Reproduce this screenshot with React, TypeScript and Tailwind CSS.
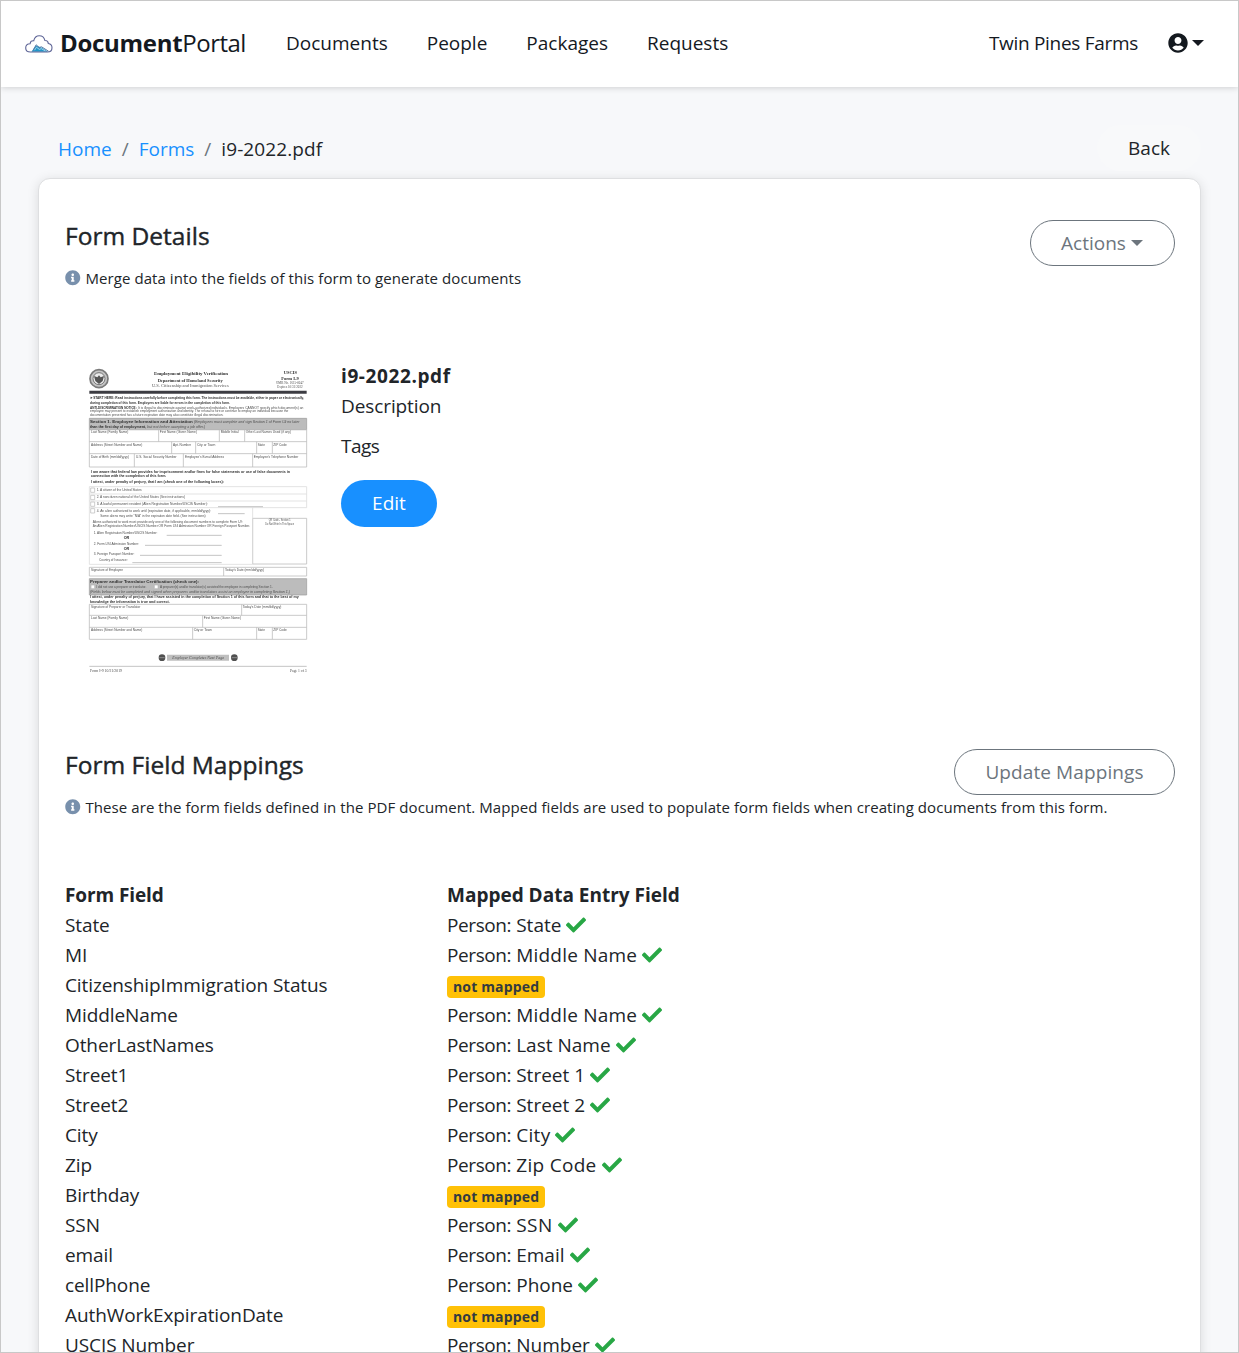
import type { ReactNode } from "react";
import { FaCheck, FaInfoCircle, FaUserCircle } from "react-icons/fa";

const navItems = ["Documents", "People", "Packages", "Requests"];

type Mapping = { field: string; mapped?: string; tracking?: string };

const mappings: Mapping[] = [
  { field: "State", mapped: "State" },
  { field: "MI", mapped: "Middle Name", tracking: "tracking-[0.2px]" },
  { field: "CitizenshipImmigration Status" },
  { field: "MiddleName", mapped: "Middle Name", tracking: "tracking-[0.2px]" },
  { field: "OtherLastNames", mapped: "Last Name" },
  { field: "Street1", mapped: "Street 1" },
  { field: "Street2", mapped: "Street 2" },
  { field: "City", mapped: "City", tracking: "tracking-[0.3px]" },
  { field: "Zip", mapped: "Zip Code", tracking: "tracking-[0.3px]" },
  { field: "Birthday" },
  { field: "SSN", mapped: "SSN", tracking: "tracking-[0.5px]" },
  { field: "email", mapped: "Email" },
  { field: "cellPhone", mapped: "Phone" },
  { field: "AuthWorkExpirationDate" },
  { field: "USCIS Number", mapped: "Number" },
];

// x, baseline, width, text, style: b = bold, i = italic, s = serif
type Line = [number, number, number, string, string?];

const formLines: Line[] = [
  [222, 46, 222, "Employment Eligibility Verification", "bs"],
  [233, 66, 195, "Department of Homeland Security", "bs"],
  [216, 82, 230, "U.S. Citizenship and Immigration Services", "s"],
  [611, 43, 40, "USCIS", "bs"],
  [604, 60, 52, "Form I-9", "bs"],
  [588, 73, 83, "OMB No. 1615-0047", "s"],
  [592, 85, 76, "Expires 10/31/2022", "s"],
  [30, 118, 642, "►START HERE: Read instructions carefully before completing this form. The instructions must be available, either in paper or electronically,", "b"],
  [30, 131, 420, "during completion of this form. Employers are liable for errors in the completion of this form.", "b"],
  [30, 146, 140, "ANTI-DISCRIMINATION NOTICE:", "b"],
  [174, 146, 496, "It is illegal to discriminate against work-authorized individuals. Employers CANNOT specify which document(s) an"],
  [30, 157, 595, "employee may present to establish employment authorization and identity. The refusal to hire or continue to employ an individual because the"],
  [30, 168, 400, "documentation presented has a future expiration date may also constitute illegal discrimination."],
  [30, 188, 308, "Section 1. Employee Information and Attestation", "b"],
  [342, 188, 316, "(Employees must complete and sign Section 1 of Form I-9 no later", "i"],
  [30, 203, 168, "than the first day of employment,", "b"],
  [202, 203, 174, "but not before accepting a job offer.)", "i"],
  [33, 220, 112, "Last Name (Family Name)"],
  [239, 220, 112, "First Name (Given Name)"],
  [422, 220, 54, "Middle Initial"],
  [497, 220, 136, "Other Last Names Used (if any)"],
  [33, 257, 154, "Address (Street Number and Name)"],
  [279, 257, 54, "Apt. Number"],
  [351, 257, 55, "City or Town"],
  [533, 257, 22, "State"],
  [580, 257, 40, "ZIP Code"],
  [33, 293, 114, "Date of Birth (mm/dd/yyyy)"],
  [168, 293, 122, "U.S. Social Security Number"],
  [315, 293, 117, "Employee's E-mail Address"],
  [521, 293, 134, "Employee's Telephone Number"],
  [33, 338, 597, "I am aware that federal law provides for imprisonment and/or fines for false statements or use of false documents in", "b"],
  [33, 351, 226, "connection with the completion of this form.", "b"],
  [33, 370, 399, "I attest, under penalty of perjury, that I am (check one of the following boxes):", "b"],
  [50, 394, 135, "1. A citizen of the United States"],
  [50, 415, 265, "2. A noncitizen national of the United States (See instructions)"],
  [50, 435, 333, "3. A lawful permanent resident (Alien Registration Number/USCIS Number):"],
  [50, 455, 343, "4. An alien authorized to work until (expiration date, if applicable, mm/dd/yyyy):"],
  [61, 471, 316, 'Some aliens may write "N/A" in the expiration date field. (See instructions)'],
  [38, 488, 450, "Aliens authorized to work must provide only one of the following document numbers to complete Form I-9:"],
  [38, 500, 472, "An Alien Registration Number/USCIS Number OR Form I-94 Admission Number OR Foreign Passport Number."],
  [41, 523, 191, "1. Alien Registration Number/USCIS Number:"],
  [131, 536, 17, "OR", "b"],
  [41, 555, 136, "2. Form I-94 Admission Number:"],
  [131, 569, 17, "OR", "b"],
  [41, 585, 122, "3. Foreign Passport Number:"],
  [57, 604, 86, "Country of Issuance:"],
  [566, 484, 66, "QR Code - Section 1"],
  [556, 494, 86, "Do Not Write In This Space"],
  [33, 634, 96, "Signature of Employee"],
  [435, 634, 117, "Today's Date (mm/dd/yyyy)"],
  [30, 668, 327, "Preparer and/or Translator Certification (check one):", "b"],
  [49, 683, 150, "I did not use a preparer or translator."],
  [240, 683, 338, "A preparer(s) and/or translator(s) assisted the employee in completing Section 1."],
  [30, 698, 600, "(Fields below must be completed and signed when preparers and/or translators assist an employee in completing Section 1.)", "i"],
  [30, 715, 626, "I attest, under penalty of perjury, that I have assisted in the completion of Section 1 of this form and that to the best of my", "b"],
  [30, 729, 239, "knowledge the information is true and correct.", "b"],
  [33, 744, 148, "Signature of Preparer or Translator"],
  [488, 744, 116, "Today's Date (mm/dd/yyyy)"],
  [33, 778, 112, "Last Name (Family Name)"],
  [371, 778, 112, "First Name (Given Name)"],
  [33, 814, 154, "Address (Street Number and Name)"],
  [341, 814, 55, "City or Town"],
  [533, 814, 22, "State"],
  [580, 814, 40, "ZIP Code"],
  [277, 897, 155, "Employer Completes Next Page", "is"],
  [30, 936, 96, "Form I-9 10/21/2019", "s"],
  [630, 936, 50, "Page 1 of 3", "s"],
];

const formRules = [
  "M28 209H680V321H28ZM28 245H680M28 281H680",
  "M236 209V245M418 209V245M494 209V245M275 245V281M347 245V281M530 245V281M577 245V281M163 281V321M310 281V321M518 281V321",
  "M28 622H680V648H28ZM431 622V648",
  "M28 733H680V838H28ZM28 766H680M28 802H680M485 733V766M368 766V802M338 802V838M530 802V838M577 802V838",
  "M518 475H680V612H518Z",
].join("");

function FormThumbnail() {
  return (
    <svg viewBox="-45 -60 798 1080" className="h-[360px] w-[266px] shrink-0 blur-[0.3px]" role="img" aria-label="i9-2022.pdf preview">
      <circle cx="57" cy="56" r="27" fill="#c4c4c4" stroke="#7a7a7a" strokeWidth="5" />
      <circle cx="57" cy="56" r="18" fill="#ececec" stroke="#777" strokeWidth="3" />
      <path d="M42 48l10 4 5-6 5 6 10-4-4 15-11 9-11-9z" fill="#555" />
      <path d="M28 92H680V101H28Z" fill="#3c3c42" />
      <path d="M28 175H680V209H28ZM28 656H680V705H28Z" fill="#bcbcbc" stroke="#999" strokeWidth="2" />
      <path d={formRules} fill="none" stroke="#bdbdbd" strokeWidth="2.4" />
      <path d="M28 380H680V443M28 380V613H518V443M28 402H680M28 423H680M28 443H680" fill="none" stroke="#dcdcdc" strokeWidth="2.4" />
      <path
        d="M414 440H549M414 461H494M260 526H425M195 556H425M180 586H425M157 608H425M28 919H680"
        stroke="#b5b5b5"
        strokeWidth="2.4"
      />
      <path
        d="M32 384h12v13h-12zM32 406h12v13h-12zM32 426h12v13h-12zM32 446h12v13h-12zM33 675h11v11h-11zM223 675h11v11h-11z"
        fill="#fff"
        stroke="#b5b5b5"
        strokeWidth="2"
      />
      <path d="M261 884H447V902H261Z" fill="#bfbfbf" />
      <circle cx="246" cy="893" r="10" fill="#505050" />
      <circle cx="463" cy="893" r="10" fill="#505050" />
      <path d="M238 893h16M455 893h16" stroke="#aaa" strokeWidth="2" />
      {formLines.map(([x, y, width, text, style = ""], i) => (
        <text
          key={i}
          x={x}
          y={y}
          textLength={width}
          lengthAdjust="spacingAndGlyphs"
          fontSize={y < 70 ? 15 : style ? 12 : 10.5}
          fontFamily={style.includes("s") ? "Liberation Serif, serif" : "Liberation Sans, sans-serif"}
          fontWeight={style.includes("b") ? 700 : 400}
          fontStyle={style.includes("i") ? "italic" : "normal"}
          fill={style.includes("b") ? "#2f2f2f" : "#4f4f4f"}
        >
          {text}
        </text>
      ))}
    </svg>
  );
}

function Logo() {
  return (
    <svg viewBox="0 0 28 20" className="mt-px ml-px h-5 w-7" fill="none">
      <path d="M6.500 17.800 10.800 11.500 17 13.800 23 17.800z" fill="#2196c9" />
      <path d="M8 16.500 11.200 10.800 14.200 13.500 16.500 12.800 23.500 17.200" stroke="#5b7ba5" strokeWidth="1" />
      <path d="m9.500 16.200 2-3 2.800 2.200 2-.7 4.200 2.300" stroke="#d9edf7" strokeWidth=".7" />
      <path
        d="M5.500 18C2.700 18 .7 16.300.7 13.900c0-2.400 1.800-4.100 4.400-4.200.2-1.900 1.600-3.100 3.600-2.900C9.500 3.700 11.500 1.800 14.200 1.800c2.900 0 5.100 1.900 5.700 4.700 2-.1 3.300 1.100 3.400 3 2.200.4 3.700 2 3.700 4.200 0 2.600-1.900 4.300-4.600 4.300z"
        stroke="#5d6496"
        strokeWidth="1.100"
      />
    </svg>
  );
}

function Caret() {
  return <span className="mb-px inline-block h-0 w-0 border-x-6 border-t-6 border-x-transparent border-t-current" />;
}

function SectionHeading({ title, hint, children }: { title: string; hint: string; children: ReactNode }) {
  return (
    <div>
      <div className="flex h-[46px] items-start justify-between">
        <h2 className="mt-px text-[24.500px] leading-[30px] font-normal tracking-[0.020px] [-webkit-text-stroke:0.4px_#212529]">{title}</h2>
        {children}
      </div>
      <p className="flex items-center gap-[5px] text-[15px] leading-6 tracking-[0.070px]">
        <FaInfoCircle className="size-[15.500px] shrink-0 text-[#7890ac]" />
        {hint}
      </p>
    </div>
  );
}

export default function App() {
  return (
    <div className="h-[1353px] overflow-hidden border border-[#c8c8c8] bg-[#f7f8fa] font-['Open_Sans',sans-serif] text-[19px] leading-[30px] text-[#212529]">
      <header className="relative flex h-[86px] items-center bg-white pr-[34px] pb-0.5 pl-[23px] text-[#14191f] shadow-[0_1px_6px_rgba(0,0,0,0.16)]">
        <Logo />
        <div className="ml-[7px] w-[186px] text-2xl leading-[30px] whitespace-nowrap">
          <span className="font-bold tracking-[-0.300px]">Document</span>
          <span className="tracking-[-0.500px]">Portal</span>
        </div>
        <nav className="ml-10 flex gap-[39px]">
          {navItems.map((item) => (
            <a key={item} href="#">{item}</a>
          ))}
        </nav>
        <span className="mr-px ml-auto tracking-[-0.3px]">Twin Pines Farms</span>
        <button className="ml-[29px] flex items-center gap-1">
          <FaUserCircle className="size-5" />
          <Caret />
        </button>
      </header>

      <main className="px-[37px] pt-[38px]">
        <div className="flex h-[46px] items-center justify-between">
          <nav className="mt-0.5 flex gap-2.5 pl-5">
            <a href="#" className="text-[#1890ff]">Home</a>
            <span className="text-[#6c757d]">/</span>
            <a href="#" className="text-[#1890ff]">Forms</a>
            <span className="text-[#6c757d]">/</span>
            <span className="tracking-[0.1px]">i9-2022.pdf</span>
          </nav>
          <button className="h-[46px] rounded-full bg-[#f8f9fa] px-[31px]">Back</button>
        </div>

        <section className="mt-[7px] h-[1300px] rounded-xl border border-[#dedfe1] bg-white pt-[41px] pr-[25px] pl-[26px] shadow-[0_2px_12px_rgba(0,0,0,0.12)]">
          <SectionHeading title="Form Details" hint="Merge data into the fields of this form to generate documents">
            <button className="flex h-[46px] w-[145px] items-center justify-center gap-[5px] rounded-full border border-[#6c757d] pr-px text-[#6c757d]">
              Actions <Caret />
            </button>
          </SectionHeading>

          <div className="mt-[50px] flex gap-2.5">
            <FormThumbnail />
            <div className="pt-[21px]">
              <p className="font-bold tracking-[0.6px]">i9-2022.pdf</p>
              <p className="tracking-[-0.1px]">Description</p>
              <p className="mt-2.5 tracking-[-0.5px]">Tags</p>
              <button className="mt-[19px] h-[47px] w-24 rounded-full bg-[#1890ff] pb-0.5 text-white">Edit</button>
            </div>
          </div>

          <div className="mt-[49px]">
            <SectionHeading
              title="Form Field Mappings"
              hint="These are the form fields defined in the PDF document. Mapped fields are used to populate form fields when creating documents from this form."
            >
              <button className="h-[46px] w-[221px] rounded-full border border-[#6c757d] tracking-[0.1px] text-[#6c757d]">
                Update Mappings
              </button>
            </SectionHeading>
          </div>

          <div className="mt-[61px] grid auto-rows-[30px] grid-cols-[382px_1fr]">
            <div className="font-bold tracking-[-0.1px]">Form Field</div>
            <div className="font-bold">Mapped Data Entry Field</div>
            {mappings.map(({ field, mapped, tracking }) => (
              <div key={field} className="contents">
                <div className="tracking-[-0.1px]">{field}</div>
                {mapped ? (
                  <div className="flex items-center">
                    <span className="mr-[5px] tracking-[-0.4px]">Person:</span>
                    <span className={tracking}>{mapped}</span>
                    <FaCheck className="mb-px ml-[5px] size-5 text-[#28a745]" />
                  </div>
                ) : (
                  <div className="flex items-center">
                    <span className="mt-1 h-[22px] rounded bg-[#ffc107] px-1.5 text-[14px] leading-[21px] font-bold tracking-[0.15px] text-[#343a40]">
                      not mapped
                    </span>
                  </div>
                )}
              </div>
            ))}
          </div>
        </section>
      </main>
    </div>
  );
}
